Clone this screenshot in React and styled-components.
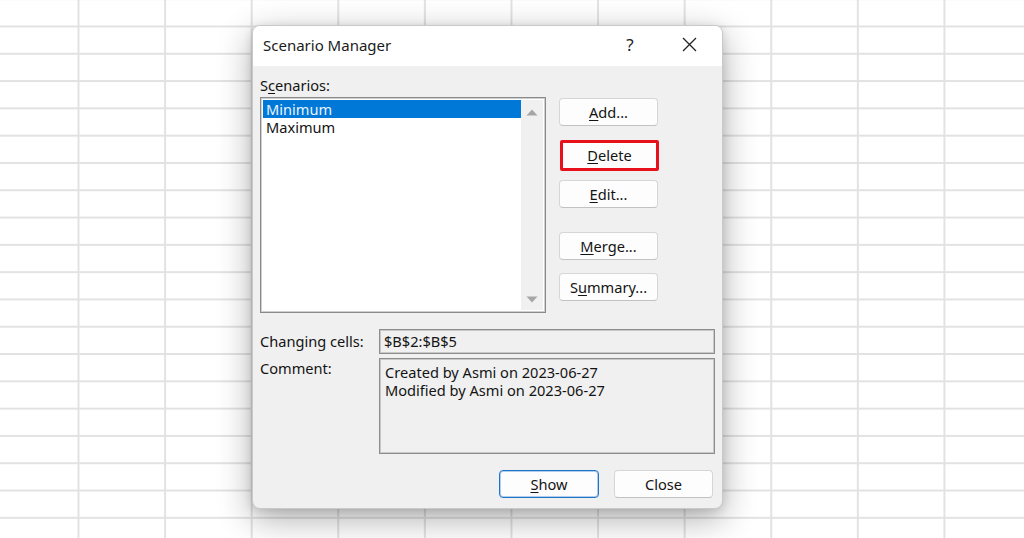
import React from "react";
import styled, { createGlobalStyle } from "styled-components";

const Global = createGlobalStyle`
  html, body { margin: 0; padding: 0; }
  body { font-family: "Noto Sans", "Open Sans", sans-serif; background: #fff; }
`;

const Sheet = styled.div`
  width: 1024px;
  height: 538px;
  overflow: hidden;
  box-sizing: border-box;
  padding: 25px 0 0 252px;
  background-color: #fff;
  background-image:
    linear-gradient(to right, #e2e2e2 0, #e2e2e2 1.5px, transparent 1.5px),
    linear-gradient(to bottom, #e2e2e2 0, #e2e2e2 1.5px, transparent 1.5px);
  background-size: 86.6px 27.3px;
  background-position: 77.5px 25.5px;
`;

const Dialog = styled.div`
  width: 471px;
  height: 484px;
  box-sizing: border-box;
  border-radius: 8px;
  background: #f0f0f0;
  border: 1px solid #c9c9c9;
  box-shadow: 0 10px 34px rgba(0, 0, 0, 0.32), 0 2px 10px rgba(0, 0, 0, 0.12);
  overflow: hidden;
  display: flex;
  flex-direction: column;
  color: #141414;
  font-size: 14.6px;
`;

const TitleBar = styled.div`
  height: 40px;
  box-sizing: border-box;
  flex: none;
  background: #fff;
  display: flex;
  align-items: center;
  padding: 0 0 3px 10px;
`;

const Title = styled.div`
  font-size: 15px;
  flex: 1;
  color: #1b1b1b;
`;

const TitleIcon = styled.div`
  width: ${(p) => p.$w}px;
  display: flex;
  justify-content: center;
  align-items: center;
  font-size: 17px;
  color: #222;
`;

const Body = styled.div`
  flex: 1;
  display: flex;
  flex-direction: column;
  padding: 11px 7px 10px 7px;
`;

const Label = styled.div`
  height: 20px;
  line-height: 17px;
`;

const U = styled.span`
  text-decoration: underline;
  text-underline-offset: 2px;
  text-decoration-thickness: 1px;
`;

const TopRow = styled.div`
  display: flex;
  align-items: flex-start;
`;

const ListBox = styled.div`
  width: 286px;
  height: 216px;
  box-sizing: border-box;
  border: 1px solid #8a8a8a;
  box-shadow: inset 0 0 0 1px #cfcfcf;
  background: #fff;
  display: flex;
  padding: 2px;
`;

const Items = styled.div`
  flex: 1;
`;

const Item = styled.div`
  height: 18px;
  line-height: 18px;
  padding-left: 3px;
  background: ${(p) => (p.$selected ? "#0078d7" : "transparent")};
  color: ${(p) => (p.$selected ? "#eaf3ff" : "#141414")};
`;

const ScrollBar = styled.div`
  width: 22px;
  background: #f0f0f0;
  display: flex;
  flex-direction: column;
  justify-content: space-between;
  align-items: center;
  padding: 9px 0 7px;
`;

const ButtonCol = styled.div`
  display: flex;
  flex-direction: column;
  margin-left: 13px;
  padding-top: 1px;
`;

const Btn = styled.button`
  font-family: inherit;
  font-size: 14.6px;
  color: #141414;
  width: ${(p) => p.$w || 99}px;
  height: ${(p) => (p.$marked ? 31 : 28)}px;
  margin-top: ${(p) => p.$mt || 0}px;
  margin-left: ${(p) => p.$ml || 0}px;
  box-sizing: border-box;
  background: #fdfdfd;
  padding: 0 0 ${(p) => (p.$marked ? 2 : 1)}px;
  cursor: default;
  border: ${(p) =>
    p.$marked
      ? "3px solid #e8101a"
      : p.$default
      ? "1px solid #1f74c8"
      : "1px solid #d6d6d6"};
  border-bottom-color: ${(p) =>
    p.$marked ? "#e8101a" : p.$default ? "#1f74c8" : "#c2c2c2"};
  box-shadow: ${(p) => (p.$default ? "inset 0 0 0 1px rgba(31,116,200,0.35)" : "none")};
  border-radius: ${(p) => (p.$marked ? 2 : 4)}px;
`;

const FieldRow = styled.div`
  display: flex;
  margin-top: ${(p) => p.$mt}px;
`;

const FieldLabel = styled.div`
  width: 119px;
  flex: none;
  line-height: 20px;
  padding-top: ${(p) => p.$pt || 0}px;
`;

const Field = styled.div`
  flex: 1;
  height: ${(p) => p.$h}px;
  box-sizing: border-box;
  border: 1px solid #8d8d8d;
  box-shadow: inset 0 0 0 1px #c8c8c8;
  background: #f0f0f0;
  padding: ${(p) => p.$pad};
  line-height: 17px;
`;

const Line = styled.div`
  height: 18px;
  line-height: 18px;
  white-space: nowrap;
`;

const Footer = styled.div`
  margin-top: 16px;
  display: flex;
  justify-content: flex-end;
  padding-right: 2px;
`;

const Arrow = ({ up }) => (
  <svg width="12" height="7" viewBox="0 0 12 7">
    <path d={up ? "M6 0.5 L11.5 6.5 L0.5 6.5 Z" : "M0.5 0.5 L11.5 0.5 L6 6.5 Z"} fill="#a6a6a6" />
  </svg>
);

export default function App() {
  return (
    <>
      <Global />
      <Sheet>
        <Dialog>
          <TitleBar>
            <Title>Scenario Manager</Title>
            <TitleIcon $w={24}>?</TitleIcon>
            <TitleIcon $w={35} />
            <TitleIcon $w={24}>
              <svg width="15" height="15" viewBox="0 0 15 15">
                <path d="M1 1 L14 14 M14 1 L1 14" stroke="#222" strokeWidth="1.3" />
              </svg>
            </TitleIcon>
            <TitleIcon $w={21} />
          </TitleBar>
          <Body>
            <Label>
              S<U>c</U>enarios:
            </Label>
            <TopRow>
              <ListBox>
                <Items>
                  <Item $selected>Minimum</Item>
                  <Item>Maximum</Item>
                </Items>
                <ScrollBar>
                  <Arrow up />
                  <Arrow />
                </ScrollBar>
              </ListBox>
              <ButtonCol>
                <Btn>
                  <U>A</U>dd...
                </Btn>
                <Btn $marked $mt={14} $ml={1}>
                  <U>D</U>elete
                </Btn>
                <Btn $mt={9}>
                  <U>E</U>dit...
                </Btn>
                <Btn $mt={24}>
                  <U>M</U>erge...
                </Btn>
                <Btn $mt={13}>
                  S<U>u</U>mmary...
                </Btn>
              </ButtonCol>
            </TopRow>
            <FieldRow $mt={16}>
              <FieldLabel $pt={2}>Changing cells:</FieldLabel>
              <Field $h={25} $pad="3px 4px">$B$2:$B$5</Field>
            </FieldRow>
            <FieldRow $mt={4}>
              <FieldLabel>Comment:</FieldLabel>
              <Field $h={96} $pad="4px 5px">
                <Line>Created by Asmi on 2023-06-27</Line>
                <Line>Modified by Asmi on 2023-06-27</Line>
              </Field>
            </FieldRow>
            <Footer>
              <Btn $default $w={100}>
                <U>S</U>how
              </Btn>
              <Btn $w={99} $ml={15}>
                Close
              </Btn>
            </Footer>
          </Body>
        </Dialog>
      </Sheet>
    </>
  );
}
